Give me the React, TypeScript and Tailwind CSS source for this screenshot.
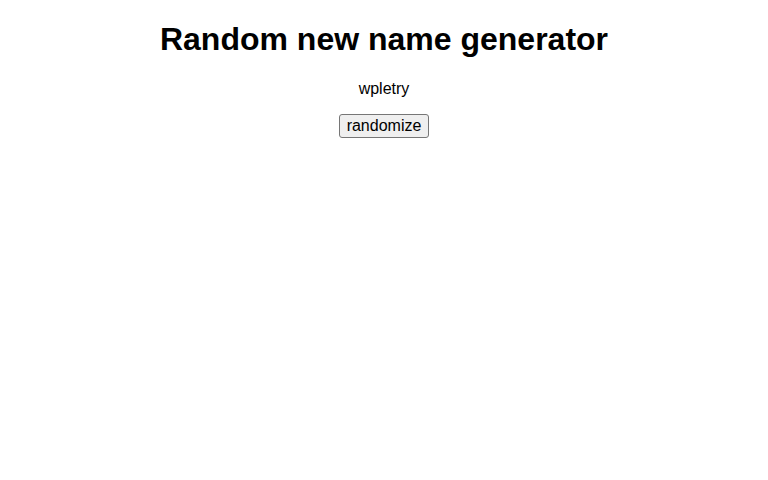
export default function App() {
  return (
    <div className="text-center text-black bg-white" style={{ fontFamily: '"Liberation Sans", Arial, sans-serif' }}>
      <h1 className="text-[32px] font-bold leading-[36.8px] pt-[21.44px] mb-[21.44px]">
        Random new name generator
      </h1>
      <p className="text-[16px] leading-[18.4px] mb-[16px]">wpletry</p>
      <button
        type="button"
        className="text-[16px] leading-[18.4px] px-[7px] py-[2px] bg-[#efefef] border border-[#767676] rounded-[3px] hover:bg-[#e5e5e5]"
      >
        randomize
      </button>
    </div>
  );
}
